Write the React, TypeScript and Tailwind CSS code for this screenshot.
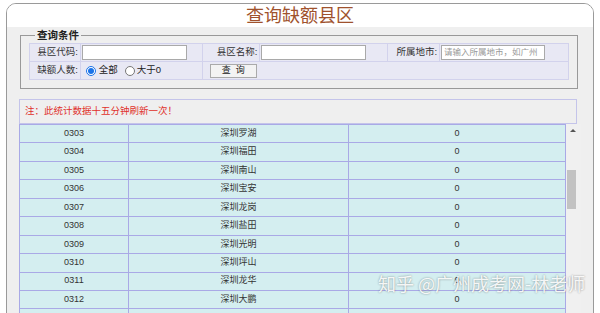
import React from "react"

const rows = [
  ["0303", "深圳罗湖"],
  ["0304", "深圳福田"],
  ["0305", "深圳南山"],
  ["0306", "深圳宝安"],
  ["0307", "深圳龙岗"],
  ["0308", "深圳盐田"],
  ["0309", "深圳光明"],
  ["0310", "深圳坪山"],
  ["0311", "深圳龙华"],
  ["0312", "深圳大鹏"],
  ["", ""],
]

function Radio({ checked, className = "" }: { checked?: boolean; className?: string }) {
  return checked ? (
    <span className={`w-[10px] h-[10px] shrink-0 rounded-full border border-[#1a73e8] flex items-center justify-center bg-white ${className}`}>
      <span className="w-[6px] h-[6px] rounded-full bg-[#1a73e8]" />
    </span>
  ) : (
    <span className={`w-[10px] h-[10px] shrink-0 rounded-full border border-[#777] bg-white block ${className}`} />
  )
}

export default function App() {
  const cell = "border border-[#d2d2ec] h-[18px] p-0"
  const label = `${cell} text-right pr-[2px] text-[#333]`
  const input = "h-[15px] border border-[#a9a9a9] bg-white block"

  return (
    <div className="w-[600px] h-[313px] overflow-hidden bg-white relative font-['Liberation_Sans','Noto_Sans_CJK_SC',sans-serif]">
      <div className="ml-[6px] mt-[3px] w-[588px] border border-[#9a9a9a] rounded-t-[10px] overflow-hidden">
        {/* title */}
        <div className="h-[23px] pt-[1px] bg-white flex items-center justify-center text-[18px] leading-none text-[#a0522d]">
          查询缺额县区
        </div>

        <div className="bg-[#efefef] pl-[12px] pr-[11px] pt-[2px] pb-[20px]">
          {/* search conditions */}
          <fieldset className="ml-[1px] mr-[4px] border border-[#999] pl-[8px] pr-[7px] pt-[2px] pb-[8px]">
            <legend className="ml-[6px] px-[2px] text-[10.5px] leading-[12px] font-bold text-[#222]">查询条件</legend>
            <table className="border-collapse w-[540px] bg-[#e8e8f4] text-[9.5px]">
              <tbody>
                <tr>
                  <td className={`${label} w-[51px]`}>县区代码:</td>
                  <td className={`${cell} w-[122px]`}>
                    <div className={`${input} w-[105px] ml-[1px]`} />
                  </td>
                  <td className={`${label} w-[58px]`}>县区名称:</td>
                  <td className={`${cell} w-[128px]`}>
                    <div className={`${input} w-[105px] ml-[1px]`} />
                  </td>
                  <td className={`${label} w-[52px]`}>所属地市:</td>
                  <td className={`${cell} w-[129px]`}>
                    <div className={`${input} w-[104px] ml-[1px] text-[8.5px] text-[#999] pl-[2px] leading-[13px] overflow-hidden whitespace-nowrap`}>
                      请输入所属地市，如广州
                    </div>
                  </td>
                </tr>
                <tr>
                  <td className={label}>缺额人数:</td>
                  <td className={cell}>
                    <div className="flex items-center pl-[5px] text-[#222]">
                      <Radio checked />
                      <span className="ml-[3px]">全部</span>
                      <Radio className="ml-[7px]" />
                      <span className="ml-[2px]">大于0</span>
                    </div>
                  </td>
                  <td className={`${cell}`} colSpan={4}>
                    <div className="ml-[7px] w-[47px] h-[14px] border border-[#aaa] bg-[#f3f3f3] flex items-center justify-center text-[9px] text-[#222] whitespace-pre">
                      查  询
                    </div>
                  </td>
                </tr>
              </tbody>
            </table>
          </fieldset>

          {/* notice */}
          <div className="mt-[10px] w-[558px] h-[25px] border border-[#c4c4ea] flex items-center pl-[5px] text-[9.5px] text-[#e0302a]">
            注：此统计数据十五分钟刷新一次！
          </div>

          {/* data table */}
          <div className="flex">
            <table className="border-collapse w-[547px] bg-[#d4eef0] text-[9px] text-[#333]">
              <tbody>
                {rows.map(([code, name], i) => (
                  <tr key={i} className="h-[18.45px]">
                    <td className="border border-[#a9a9e6] w-[109px] text-center p-0">{code}</td>
                    <td className="border border-[#a9a9e6] w-[220px] text-center p-0">{name}</td>
                    <td className="border border-[#a9a9e6] text-center p-0">{code ? "0" : ""}</td>
                  </tr>
                ))}
              </tbody>
            </table>
            {/* scrollbar */}
            <div className="w-[15px] bg-[#f0f0f0] flex flex-col items-start">
              <div className="ml-[4px] mt-[5px] w-0 h-0 border-l-[3px] border-r-[3px] border-b-[3px] border-l-transparent border-r-transparent border-b-[#555]" />
              <div className="ml-[1px] mt-[38px] w-[9px] h-[39px] bg-[#c2c2c2]" />
            </div>
          </div>
        </div>
      </div>

      {/* watermark */}
      <div className="absolute left-[378px] top-[272px] text-[18px] leading-[22px] text-white/90 whitespace-nowrap font-['Noto_Sans_CJK_SC',sans-serif] [text-shadow:0_0_2px_rgba(0,0,0,0.45)]">
        知乎 @广州成考网-林老师
      </div>
    </div>
  )
}
